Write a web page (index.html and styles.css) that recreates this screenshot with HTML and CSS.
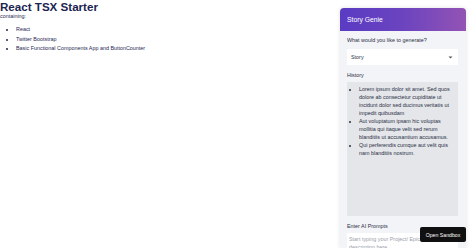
FILE: index.html
```html
<!DOCTYPE html>
<html>
<head>
<meta charset="utf-8">
<link rel="stylesheet" href="styles.css">
</head>
<body>
<main class="page">
  <h1 class="title">React TSX Starter</h1>
  <p class="intro">containing:</p>
  <ul class="features">
    <li>React</li>
    <li>Twitter Bootstrap</li>
    <li>Basic Functional Components App and ButtonCounter</li>
  </ul>
</main>
<aside class="genie">
  <header class="genie-head">Story Genie</header>
  <div class="genie-body">
    <label class="field-label">What would you like to generate?</label>
    <div class="select">
      <span>Story</span>
      <svg class="chev" width="5" height="3" viewBox="0 0 5 3"><path d="M0.5 0.5 L2.5 2.5 L4.5 0.5 Z" fill="#555"/></svg>
    </div>
    <label class="field-label">History</label>
    <div class="history">
      <ul>
        <li>Lorem ipsum dolor sit amet. Sed quos dolore ab consectetur cupiditate ut incidunt dolor sed ducimus veritatis ut impedit quibusdam</li>
        <li>Aut voluptatum ipsam hic voluptas mollitia qui itaque velit sed rerum blanditiis ut accusantium accusamus.</li>
        <li>Qui perferendis cumque aut velit quis nam blanditiis nostrum.</li>
      </ul>
    </div>
    <label class="field-label">Enter AI Prompts</label>
    <div class="prompt">Start typing your Project/ Epic/ User Stories description here</div>
  </div>
</aside>
<button class="sandbox">Open Sandbox</button>
</body>
</html>
```
FILE: styles.css
```css
html, body {
  margin: 0;
  padding: 0;
  background: #fff;
  font-family: "Liberation Sans", Arial, sans-serif;
  overflow: hidden;
  height: 248px;
}
.page {
  color: #1f2755;
}
.title {
  margin: 0;
  font-size: 11.6px;
  font-weight: bold;
  line-height: 13px;
  color: #1c2452;
}
.intro {
  margin: 0;
  font-size: 5.4px;
  line-height: 7px;
}
.features {
  margin: 5px 0 0;
  padding-left: 16px;
  font-size: 5.4px;
  line-height: 9.6px;
}
.genie {
  position: absolute;
  left: 340px;
  top: 8px;
  width: 126px;
  height: 240px;
  border-radius: 4px 4px 0 0;
  overflow: hidden;
  background: #f3f4f7;
  box-shadow: 0 0 4px rgba(0,0,0,0.12);
}
.genie-head {
  height: 23px;
  display: flex;
  align-items: center;
  padding-left: 7px;
  color: #fff;
  font-size: 6.8px;
  background: linear-gradient(90deg, #5a3bc3 0%, #6b44bf 50%, #9453b5 100%);
}
.genie-body {
  padding: 0 8px 0 7px;
  display: flex;
  flex-direction: column;
  color: #2a2f45;
  font-size: 5.4px;
}
.field-label {
  display: block;
  line-height: 8px;
}
.genie-body > .field-label:first-child {
  margin-top: 5px;
  margin-bottom: 5px;
}
.select {
  height: 16px;
  background: #fff;
  display: flex;
  align-items: center;
  justify-content: space-between;
  padding: 0 5px 0 4px;
  margin-bottom: 6px;
}
.chev { display: block; }
.history {
  margin-top: 3px;
  height: 134px;
  background: #e4e6ea;
  padding: 3px 4px 0 0;
  box-sizing: border-box;
}
.history ul {
  margin: 0;
  padding-left: 12px;
  line-height: 8px;
}
.genie-body .history + .field-label {
  margin-top: 6px;
}
.prompt {
  margin-top: 3px;
  background: #fff;
  color: #9aa0ab;
  padding: 2px 2px;
  line-height: 8px;
  height: 30px;
}
.sandbox {
  position: fixed;
  right: 8px;
  bottom: 6px;
  width: 46px;
  height: 15px;
  padding: 0;
  border: 0;
  border-radius: 2px;
  background: #101010;
  color: #fff;
  font-family: "Liberation Sans", Arial, sans-serif;
  font-size: 5.2px;
}
```
